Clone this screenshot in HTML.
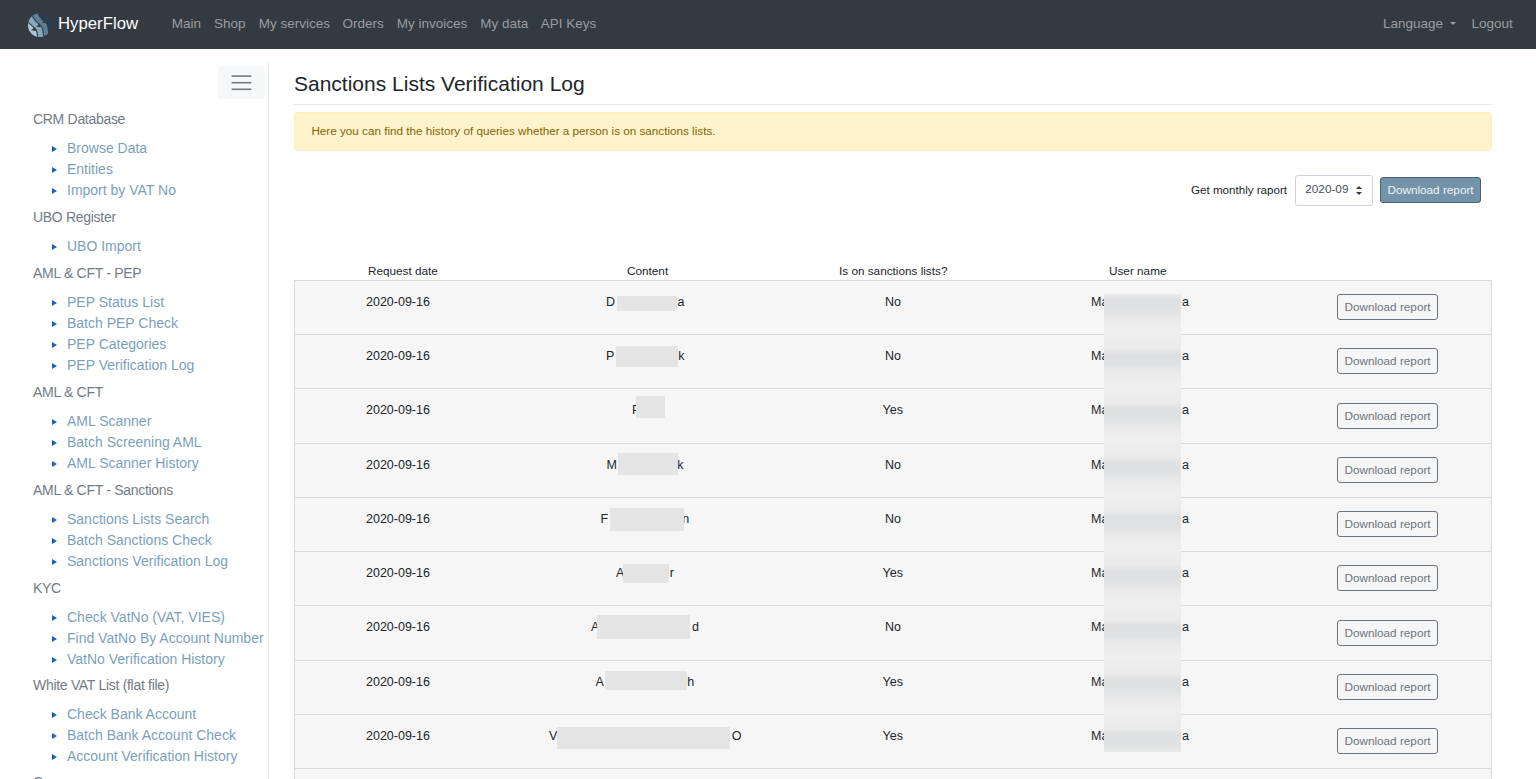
<!DOCTYPE html>
<html><head><meta charset="utf-8">
<style>
*{box-sizing:border-box;margin:0;padding:0}
html,body{width:1536px;height:779px;overflow:hidden;background:#fff;font-family:"Liberation Sans",sans-serif;color:#212529}
.a{position:absolute;white-space:nowrap;line-height:1}
#nav{position:absolute;left:0;top:0;width:1536px;height:49px;background:#333a42}
.nl{position:absolute;top:17px;font-size:13.5px;color:#9a9da1;line-height:1}
#side{position:absolute;left:0;top:49px;width:269px;height:730px}
#sb{position:absolute;left:268px;top:63px;width:1px;height:716px;background:#e6e6e6}
#ham{position:absolute;left:218px;top:66px;width:47px;height:33px;background:#f6f7f8;border-radius:4px}
#ham i{position:absolute;left:13.6px;width:19.7px;height:1.7px;background:#7a7a7a}
.sh{position:absolute;left:33px;font-size:14px;letter-spacing:-0.3px;color:#737b83;line-height:1;margin-top:-0.6px}
.sl{position:absolute;left:67px;font-size:14px;color:#7b9fbb;line-height:1;margin-top:-0.5px}
.sl:before{content:"";position:absolute;left:-14.9px;top:5.4px;border-left:5px solid #1b64b4;border-top:3.2px solid transparent;border-bottom:3.2px solid transparent}
.th{position:absolute;top:265px;font-size:11.75px;color:#212529;line-height:1}
.row{position:absolute;left:294px;width:1198px;height:54.2px;background:#f6f6f6;border:1px solid #d9d9d9;border-bottom:0}
.c{position:absolute;font-size:12.5px;color:#212529;line-height:1;white-space:nowrap}
.blur{position:absolute;background:#e4e4e4;border-radius:1px;filter:blur(0.5px)}
.ublur{position:absolute;background:repeating-linear-gradient(180deg,#ebebec 0px,#dfe0e1 6px,#e0e1e2 16px,#ebebec 26px,#efefef 38px,#ebebec 54.22px);filter:blur(0.4px)}
.btn{position:absolute;left:1337px;width:101px;height:26px;border:1px solid #6c757d;border-radius:3px;font-size:11.75px;color:#6c757d;line-height:24px;text-align:center;background:transparent}
</style></head><body>
<div id="nav">
  <svg style="position:absolute;left:24px;top:10px" width="32" height="32" viewBox="0 0 32 32">
    <defs><clipPath id="cc"><circle cx="15.85" cy="15.1" r="11.8"/></clipPath></defs>
    <g clip-path="url(#cc)" stroke-linejoin="round">
      <rect x="0" y="0" width="32" height="32" fill="#2b3d53"/>
      <path d="M13.5,0 L14.2,3.7 L15.7,6.4 L17.8,9.3 L20.7,11.4 L22.8,13.6 L23.9,17.2 L24.5,21.1 L24.6,24.4 L24.6,32 L-2,32 L-2,0 Z" fill="#5d8098"/>
      <path d="M7,3 L8.65,6.75 L10.3,9.3 L12.8,12.1 L15.3,14.3 L17.8,16.8 L18.9,20.4 L19.6,25.8 L19.8,32 L-2,32 L-2,3 Z" fill="#85a7bc"/>
      <path d="M-1,9.5 L4.2,12.5 L6.7,14.7 L9.2,16.8 L12.1,19.7 L13.1,22.6 L13.5,26.2 L13.6,32 L-2,32 Z" fill="#a8c8d8"/>
      <g fill="none" stroke="#343a40" stroke-width="1.1">
      <path d="M-1,9.5 L4.2,12.5 L6.7,14.7 L9.2,16.8 L12.1,19.7 L13.1,22.6 L13.5,26.2 L13.6,32"/><path d="M7,3 L8.65,6.75 L10.3,9.3 L12.8,12.1 L15.3,14.3 L17.8,16.8 L18.9,20.4 L19.6,25.8 L19.8,32"/><path d="M13.5,0 L14.2,3.7 L15.7,6.4 L17.8,9.3 L20.7,11.4 L22.8,13.6 L23.9,17.2 L24.5,21.1 L24.6,24.4 L24.6,32"/>
      </g>
      <g fill="#343a40">
      <path d="M6.9,20.2 L11.2,16.9 L12,21 Z"/>
      <path d="M12.3,16.6 L15.9,13.3 L16.8,17.2 Z"/>
      <path d="M17.8,12.6 L20.9,9.7 L21.7,13 Z"/>
      </g>
    </g>
  </svg>
  <div class="a" style="left:58px;top:16px;font-size:16.75px;color:#fff">HyperFlow</div>
  <div class="nl" style="left:171.7px">Main</div>
  <div class="nl" style="left:213.9px">Shop</div>
  <div class="nl" style="left:258.7px">My services</div>
  <div class="nl" style="left:342.5px">Orders</div>
  <div class="nl" style="left:396.7px">My invoices</div>
  <div class="nl" style="left:480.2px">My data</div>
  <div class="nl" style="left:540.7px">API Keys</div>
  <div class="nl" style="left:1383px">Language</div>
  <div style="position:absolute;left:1450px;top:21.5px;border-top:3.6px solid #9a9da1;border-left:3.9px solid transparent;border-right:3.9px solid transparent"></div>
  <div class="nl" style="left:1471.5px">Logout</div>
</div>

<div id="sb"></div>
<div id="ham"><svg width="47" height="33" style="position:absolute;left:0;top:0"><g stroke="#777" stroke-width="1.6"><line x1="13.6" x2="33.3" y1="10.1" y2="10.1"/><line x1="13.6" x2="33.3" y1="16.7" y2="16.7"/><line x1="13.6" x2="33.3" y1="23.3" y2="23.3"/></g></svg></div>

<div class="sh" style="top:113px">CRM Database</div>
<div class="sl" style="top:141px">Browse Data</div>
<div class="sl" style="top:162px">Entities</div>
<div class="sl" style="top:183px">Import by VAT No</div>
<div class="sh" style="top:211px">UBO Register</div>
<div class="sl" style="top:239px">UBO Import</div>
<div class="sh" style="top:267px">AML &amp; CFT - PEP</div>
<div class="sl" style="top:295px">PEP Status List</div>
<div class="sl" style="top:316px">Batch PEP Check</div>
<div class="sl" style="top:337px">PEP Categories</div>
<div class="sl" style="top:358px">PEP Verification Log</div>
<div class="sh" style="top:386px">AML &amp; CFT</div>
<div class="sl" style="top:414px">AML Scanner</div>
<div class="sl" style="top:435px">Batch Screening AML</div>
<div class="sl" style="top:456px">AML Scanner History</div>
<div class="sh" style="top:484px">AML &amp; CFT - Sanctions</div>
<div class="sl" style="top:512px">Sanctions Lists Search</div>
<div class="sl" style="top:533px">Batch Sanctions Check</div>
<div class="sl" style="top:554px">Sanctions Verification Log</div>
<div class="sh" style="top:582px">KYC</div>
<div class="sl" style="top:610px">Check VatNo (VAT, VIES)</div>
<div class="sl" style="top:631px">Find VatNo By Account Number</div>
<div class="sl" style="top:652px">VatNo Verification History</div>
<div class="sh" style="top:679px">White VAT List (flat file)</div>
<div class="sl" style="top:707px">Check Bank Account</div>
<div class="sl" style="top:728px">Batch Bank Account Check</div>
<div class="sl" style="top:749px">Account Verification History</div>
<div class="sh" style="top:775.5px">Company</div>

<div class="a" style="left:294px;top:72.6px;font-size:21px;color:#212529">Sanctions Lists Verification Log</div>
<div style="position:absolute;left:294px;top:104px;width:1198px;height:1px;background:#e8e8e8"></div>
<div style="position:absolute;left:294px;top:112px;width:1198px;height:39px;background:#fff3cd;border:1px solid #ffeeba;border-radius:4px"></div>
<div class="a" style="left:311.4px;top:125px;font-size:11.7px;color:#856404">Here you can find the history of queries whether a person is on sanctions lists.</div>

<div class="a" style="left:1191px;top:184px;font-size:11.6px;color:#212529">Get monthly raport</div>
<div style="position:absolute;left:1295px;top:175px;width:78px;height:31px;border:1px solid #ced4da;border-radius:3px;background:#fff"></div>
<div class="a" style="left:1305.3px;top:183.3px;font-size:11.75px;color:#495057">2020-09</div>
<div style="position:absolute;left:1356px;top:186.4px;border-bottom:3.5px solid #343a40;border-left:3.2px solid transparent;border-right:3.2px solid transparent"></div>
<div style="position:absolute;left:1356px;top:191.6px;border-top:3.5px solid #343a40;border-left:3.2px solid transparent;border-right:3.2px solid transparent"></div>
<div style="position:absolute;left:1380px;top:177px;width:101px;height:26px;background:#7393a8;border:1px solid #4d6170;border-radius:3px;font-size:11.75px;color:#eef2f5;line-height:24px;text-align:center">Download report</div>

<div class="th" style="left:368px">Request date</div>
<div class="th" style="left:627px">Content</div>
<div class="th" style="left:839px">Is on sanctions lists?</div>
<div class="th" style="left:1109px">User name</div>

<div class="row" style="top:280.00px"></div>
<div class="row" style="top:334.22px"></div>
<div class="row" style="top:388.44px"></div>
<div class="row" style="top:442.66px"></div>
<div class="row" style="top:496.88px"></div>
<div class="row" style="top:551.10px"></div>
<div class="row" style="top:605.32px"></div>
<div class="row" style="top:659.54px"></div>
<div class="row" style="top:713.76px"></div>
<div class="row" style="top:767.98px"></div>
<div class="c" style="left:366px;top:296.00px">2020-09-16</div>
<div class="c" style="left:606px;top:296.00px">D</div>
<div class="c" style="right:851.5px;top:296.00px">a</div>
<div class="blur" style="left:617.0px;top:295.8px;width:60.0px;height:14.9px"></div>
<div class="c" style="left:885px;top:296.00px">No</div>
<div class="c" style="left:1091px;top:296.00px">Ma</div>
<div class="c" style="right:347.0px;top:296.00px">a</div>
<div class="btn" style="top:294.20px">Download report</div>
<div class="c" style="left:366px;top:350.22px">2020-09-16</div>
<div class="c" style="left:606px;top:350.22px">P</div>
<div class="c" style="right:851.5px;top:350.22px">k</div>
<div class="blur" style="left:616.0px;top:345.9px;width:62.4px;height:21.4px"></div>
<div class="c" style="left:885px;top:350.22px">No</div>
<div class="c" style="left:1091px;top:350.22px">Ma</div>
<div class="c" style="right:347.0px;top:350.22px">a</div>
<div class="btn" style="top:348.42px">Download report</div>
<div class="c" style="left:366px;top:404.44px">2020-09-16</div>
<div class="c" style="left:632px;top:404.44px">P</div>
<div class="blur" style="left:636.0px;top:396.1px;width:29.0px;height:22.3px"></div>
<div class="c" style="left:882.5px;top:404.44px">Yes</div>
<div class="c" style="left:1091px;top:404.44px">Ma</div>
<div class="c" style="right:347.0px;top:404.44px">a</div>
<div class="btn" style="top:402.64px">Download report</div>
<div class="c" style="left:366px;top:458.66px">2020-09-16</div>
<div class="c" style="left:606.5px;top:458.66px">M</div>
<div class="c" style="right:852.5px;top:458.66px">k</div>
<div class="blur" style="left:617.7px;top:452.7px;width:60.1px;height:22.7px"></div>
<div class="c" style="left:885px;top:458.66px">No</div>
<div class="c" style="left:1091px;top:458.66px">Ma</div>
<div class="c" style="right:347.0px;top:458.66px">a</div>
<div class="btn" style="top:456.86px">Download report</div>
<div class="c" style="left:366px;top:512.88px">2020-09-16</div>
<div class="c" style="left:600.5px;top:512.88px">F</div>
<div class="c" style="right:846.9px;top:512.88px">n</div>
<div class="blur" style="left:610.0px;top:508.0px;width:74.0px;height:22.6px"></div>
<div class="c" style="left:885px;top:512.88px">No</div>
<div class="c" style="left:1091px;top:512.88px">Ma</div>
<div class="c" style="right:347.0px;top:512.88px">a</div>
<div class="btn" style="top:511.08px">Download report</div>
<div class="c" style="left:366px;top:567.10px">2020-09-16</div>
<div class="c" style="left:616px;top:567.10px">A</div>
<div class="c" style="right:862.0px;top:567.10px">r</div>
<div class="blur" style="left:622.8px;top:564.0px;width:46.1px;height:19.2px"></div>
<div class="c" style="left:882.5px;top:567.10px">Yes</div>
<div class="c" style="left:1091px;top:567.10px">Ma</div>
<div class="c" style="right:347.0px;top:567.10px">a</div>
<div class="btn" style="top:565.30px">Download report</div>
<div class="c" style="left:366px;top:621.32px">2020-09-16</div>
<div class="c" style="left:591px;top:621.32px">A</div>
<div class="c" style="right:837.0px;top:621.32px">d</div>
<div class="blur" style="left:596.9px;top:615.0px;width:93.3px;height:24.0px"></div>
<div class="c" style="left:885px;top:621.32px">No</div>
<div class="c" style="left:1091px;top:621.32px">Ma</div>
<div class="c" style="right:347.0px;top:621.32px">a</div>
<div class="btn" style="top:619.52px">Download report</div>
<div class="c" style="left:366px;top:675.54px">2020-09-16</div>
<div class="c" style="left:595.5px;top:675.54px">A</div>
<div class="c" style="right:841.8px;top:675.54px">h</div>
<div class="blur" style="left:605.2px;top:671.3px;width:81.8px;height:18.9px"></div>
<div class="c" style="left:882.5px;top:675.54px">Yes</div>
<div class="c" style="left:1091px;top:675.54px">Ma</div>
<div class="c" style="right:347.0px;top:675.54px">a</div>
<div class="btn" style="top:673.74px">Download report</div>
<div class="c" style="left:366px;top:729.76px">2020-09-16</div>
<div class="c" style="left:549px;top:729.76px">V</div>
<div class="c" style="right:794.6px;top:729.76px">O</div>
<div class="blur" style="left:557.3px;top:727.0px;width:173.0px;height:21.7px"></div>
<div class="c" style="left:882.5px;top:729.76px">Yes</div>
<div class="c" style="left:1091px;top:729.76px">Ma</div>
<div class="c" style="right:347.0px;top:729.76px">a</div>
<div class="btn" style="top:727.96px">Download report</div>
<div class="ublur" style="left:1104px;top:294px;width:77px;height:458px"></div>
</body></html>
